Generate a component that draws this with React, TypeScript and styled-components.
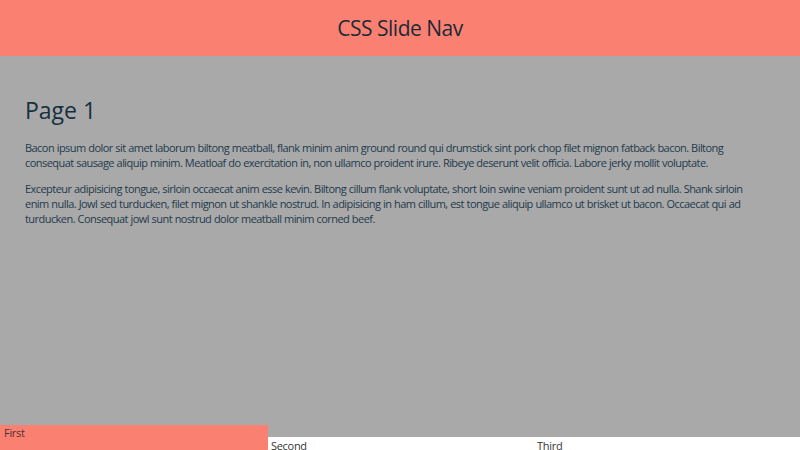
import styled, { createGlobalStyle } from "styled-components";
import React from "react";

const GlobalStyle = createGlobalStyle`
  html, body {
    margin: 0;
    padding: 0;
    height: 100%;
  }
  body {
    background: #a9a9a9;
    font-family: "Open Sans", "Noto Sans", sans-serif;
    color: #1c3444;
    overflow: hidden;
  }
  #root {
    height: 100%;
  }
`;

const tabs = ["First", "Second", "Third"];

const App: React.FC = () => {
  return (
    <>
      <GlobalStyle />
      <Page>
        <Header>
          <Title>CSS Slide Nav</Title>
        </Header>
        <Content>
          <PageTitle>Page 1</PageTitle>
          <Paragraph>
            Bacon ipsum dolor sit amet laborum biltong meatball, flank minim anim ground round qui drumstick sint
            pork chop filet mignon fatback bacon. Biltong consequat sausage aliquip minim. Meatloaf do exercitation
            in, non ullamco proident irure. Ribeye deserunt velit officia. Labore jerky mollit voluptate.
          </Paragraph>
          <Paragraph>
            Excepteur adipisicing tongue, sirloin occaecat anim esse kevin. Biltong cillum flank voluptate, short
            loin swine veniam proident sunt ut ad nulla. Shank sirloin enim nulla. Jowl sed turducken, filet mignon
            ut shankle nostrud. In adipisicing in ham cillum, est tongue aliquip ullamco ut brisket ut bacon.
            Occaecat qui ad turducken. Consequat jowl sunt nostrud dolor meatball minim corned beef.
          </Paragraph>
        </Content>
        <Nav>
          {tabs.map((label, i) => (
            <Tab key={label} $active={i === 0}>
              {label}
            </Tab>
          ))}
        </Nav>
      </Page>
    </>
  );
};

const Page = styled.div`
  height: 100%;
  display: flex;
  flex-direction: column;
`;

const Header = styled.header`
  height: 56px;
  background: #fa8072;
  display: flex;
  justify-content: center;
  align-items: center;
  flex-shrink: 0;
`;

const Title = styled.h1`
  margin: 0;
  font-size: 21px;
  font-weight: 400;
  letter-spacing: -0.5px;
  color: #1c2a38;
`;

const Content = styled.main`
  flex: 1;
  padding: 38px 35px 0 25px;
`;

const PageTitle = styled.h2`
  margin: 0 0 14px;
  font-size: 23px;
  font-weight: 400;
  color: #15303f;
`;

const Paragraph = styled.p`
  margin: 0 0 11px;
  font-size: 11px;
  line-height: 15px;
  letter-spacing: -0.55px;
  word-spacing: 0.3px;
  color: #1f3a4c;
`;

const Nav = styled.nav`
  display: flex;
  align-items: flex-start;
  height: 25px;
  flex-shrink: 0;
`;

const Tab = styled.div<{ $active?: boolean }>`
  flex: 1;
  box-sizing: border-box;
  height: ${({ $active }) => ($active ? "25px" : "13px")};
  margin-top: ${({ $active }) => ($active ? "0" : "12px")};
  padding: ${({ $active }) => ($active ? "1px 4px 0" : "2px 3px 0")};
  background: ${({ $active }) => ($active ? "#fa8072" : "#ffffff")};
  font-size: 11px;
  line-height: 13px;
  letter-spacing: -0.3px;
  color: ${({ $active }) => ($active ? "#4a3330" : "#333333")};
  overflow: hidden;
`;

export default App;
